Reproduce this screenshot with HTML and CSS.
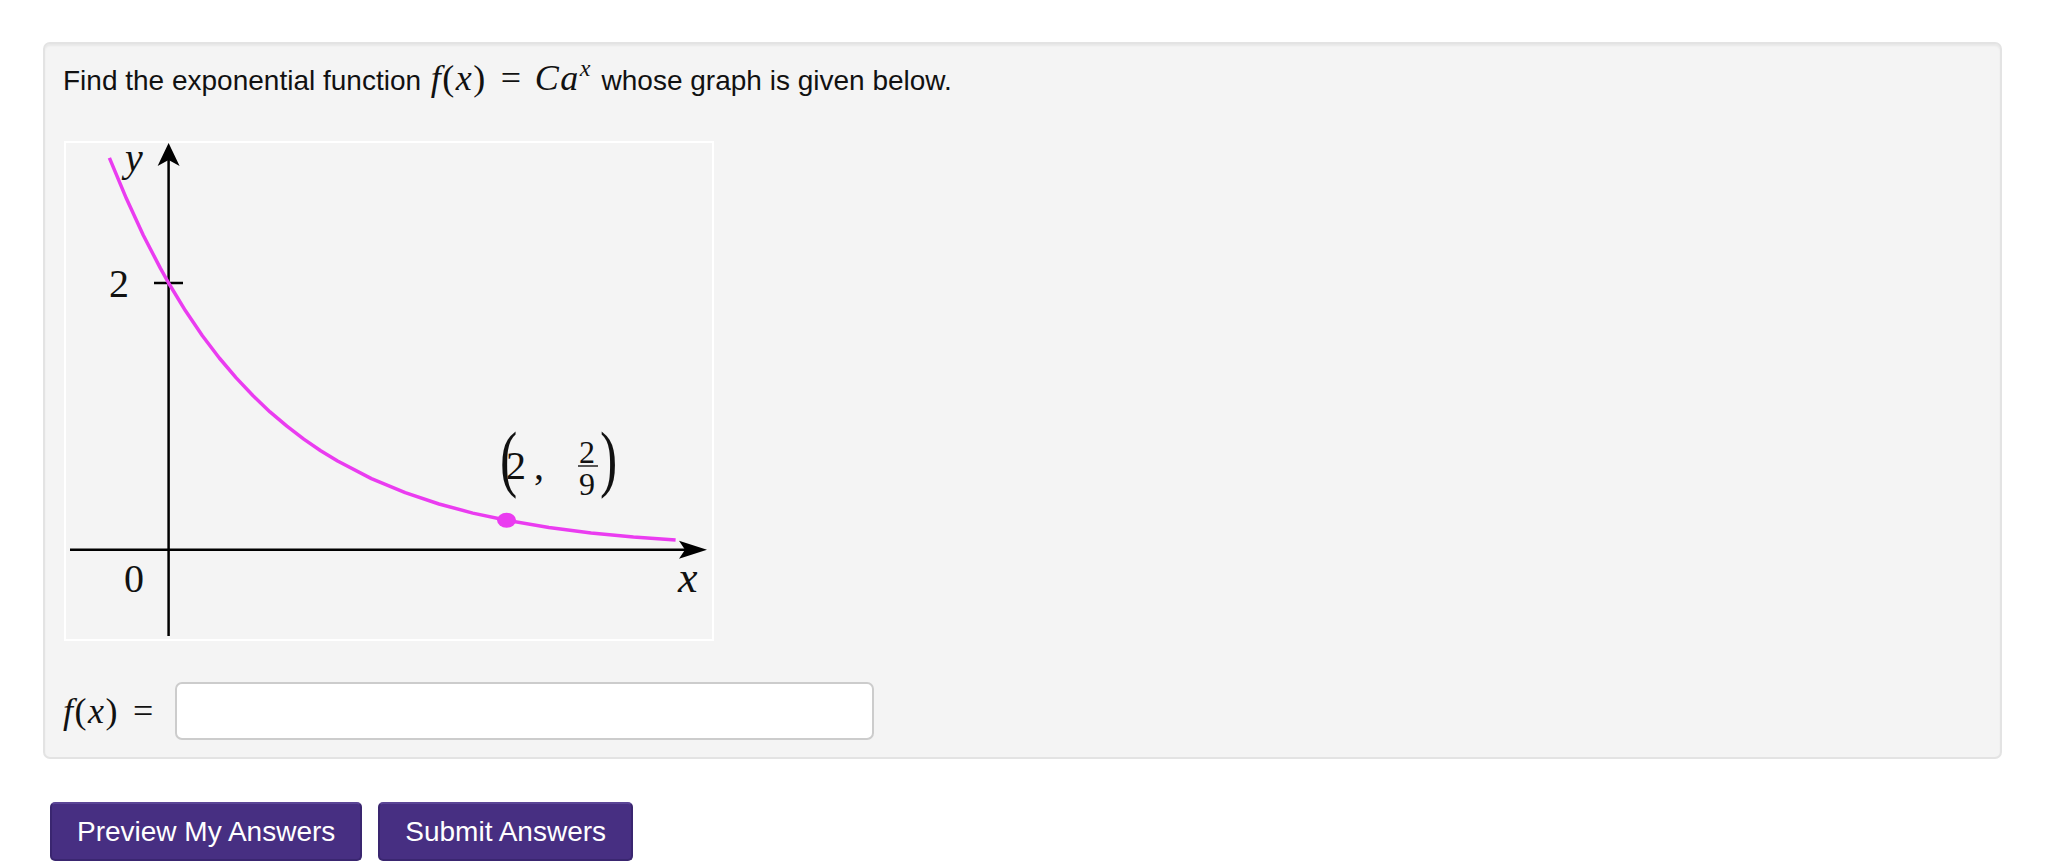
FILE: index.html
```html
<!DOCTYPE html>
<html lang="en">
<head>
  <meta charset="UTF-8" />
  <title>Exponential function</title>
  <link rel="stylesheet" href="styles.css">
</head>
<body>
  <div class="page">
    <div class="problem">
      <p class="prompt">
        Find the exponential function
        <span class="math"><i>f</i>(<i>x</i>)<span class="eq">=</span><i>C</i><i>a</i><sup><i>x</i></sup></span>
        whose graph is given below.
      </p>

      <div class="graph">
        <svg width="650" height="500" viewBox="0 0 650 500">
          <rect x="1" y="1" width="648" height="498" fill="none" stroke="#fff" stroke-width="2" />

          <!-- axes -->
          <line x1="104.6" y1="18" x2="104.6" y2="495" stroke="#000" stroke-width="2.5" />
          <polygon points="104.6,2 115.6,25 104.6,19 93.6,25" fill="#000" />
          <line x1="6" y1="408.7" x2="622" y2="408.7" stroke="#000" stroke-width="2.5" />
          <polygon points="643,408.7 615,399.7 621,408.7 615,417.7" fill="#000" />
          <line x1="90" y1="142" x2="119" y2="142" stroke="#000" stroke-width="2.5" />

          <!-- y = 2 (1/3)^x -->
          <polyline fill="none" stroke="#ea3cf0" stroke-width="3.5" stroke-linejoin="round"
            points="45.4,16.8 62.4,57.6 79.3,94.2 96.2,126.9 104.6,142 121.5,169.8 138.4,194.7 155.3,217 172.2,236.9 189.1,254.8 206,270.9 222.9,285.2 239.8,298.1 256.7,309.7 273.6,320 307.4,337.6 341.2,351.6 375,363 408.8,372.1 442.6,379.3 484.9,386.5 527.1,391.9 569.4,396 611.6,399.1" />
          <ellipse cx="442.6" cy="379.3" rx="9.5" ry="7.5" fill="#ea3cf0" />

          <!-- labels -->
          <g class="lbl">
            <text x="45" y="156" font-size="40">2</text>
            <text x="60" y="451" font-size="40">0</text>
            <text x="61" y="30" font-size="40" font-style="italic">y</text>
            <text x="614" y="451" font-size="44" font-style="italic">x</text>

            <text transform="translate(436,342) scale(0.7,1)" font-size="74">(</text>
            <text x="442" y="338" font-size="40">2</text>
            <text x="470" y="338" font-size="40">,</text>
            <text x="515" y="322" font-size="32">2</text>
            <line x1="514" y1="325" x2="534" y2="325" stroke="#000" stroke-width="1.3" />
            <text x="515" y="354" font-size="32">9</text>
            <text transform="translate(536,342) scale(0.7,1)" font-size="74">)</text>
          </g>
        </svg>
      </div>

      <div class="answer-row">
        <span class="math"><i>f</i>(<i>x</i>)<span class="eq">=</span></span>
        <input type="text" class="answer" />
      </div>
    </div>

    <div class="buttons">
      <button class="btn">Preview My Answers</button>
      <button class="btn">Submit Answers</button>
    </div>
  </div>
</body>
</html>
```

FILE: styles.css
```css
* {
  margin: 0;
  padding: 0;
  box-sizing: border-box;
}

body {
  background: #fff;
  color: #111;
  font-family: "Liberation Sans", Arial, Helvetica, sans-serif;
  font-size: 28px;
}

.page {
  padding: 42px 48px 0 43px;
}

.problem {
  background: #f4f4f4;
  border: 2px solid #e3e3e3;
  border-radius: 7px;
  box-shadow: inset 0 2px 2px rgba(0, 0, 0, 0.05);
  padding: 18px 18px 17px 18px;
}

.prompt {
  line-height: 38px;
  margin-bottom: 41px;
}

.math {
  font-family: "Liberation Serif", "Times New Roman", serif;
  font-size: 36px;
  letter-spacing: 1.5px;
  line-height: 0;
  margin: 0 2px;
}

.math i {
  font-style: italic;
}

.math .eq {
  margin: 0 12px 0 14px;
}

.math sup {
  font-size: 24px;
  vertical-align: 14px;
  line-height: 0;
}

.graph {
  width: 650px;
  height: 500px;
  margin-left: 1px;
}

.graph svg {
  display: block;
}

.lbl text {
  font-family: "Liberation Serif", "Times New Roman", serif;
  fill: #111;
}

.answer-row {
  display: flex;
  align-items: center;
  margin-top: 41px;
}

.answer-row .math {
  margin: 0;
  width: 112px;
  white-space: nowrap;
}

.answer-row .math .eq {
  margin: 0 0 0 14px;
}

.answer {
  width: 699px;
  height: 58px;
  border: 2px solid #ccc;
  border-radius: 7px;
  background: #fff;
  font-size: 26px;
  padding: 0 12px;
}

.buttons {
  display: flex;
  gap: 16px;
  margin: 43px 0 0 7px;
}

.btn {
  height: 59px;
  padding: 0 25px;
  background: #472f82;
  color: #fff;
  border: 2px solid #3a2670;
  border-top-color: #5b4596;
  border-radius: 5px;
  font-family: "Liberation Sans", Arial, Helvetica, sans-serif;
  font-size: 28px;
  cursor: pointer;
}

.btn:hover {
  background: #3d2873;
}
```
